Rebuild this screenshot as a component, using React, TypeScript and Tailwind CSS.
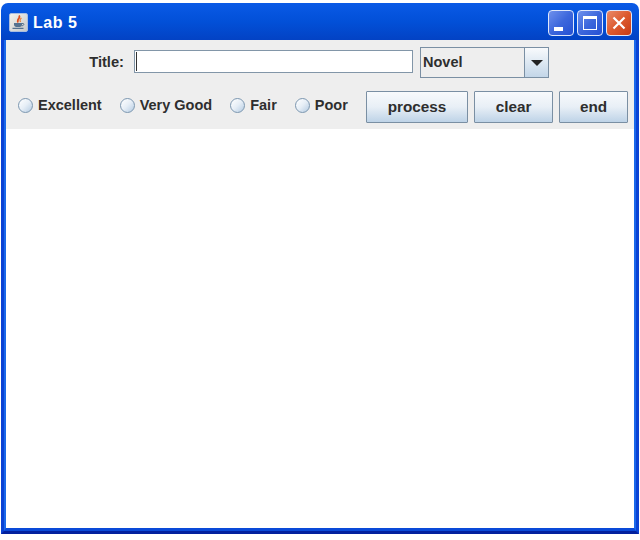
const radioOptions = [
  { label: "Excellent", gap: "mr-[18px]" },
  { label: "Very Good", gap: "mr-[18px]" },
  { label: "Fair", gap: "mr-[18px]" },
  { label: "Poor", gap: "" },
]

function Radio({ label, gap }: { label: string; gap: string }) {
  return (
    <label className={`flex items-center gap-[5px] ${gap}`}>
      <span className="w-[15px] h-[15px] rounded-full border border-[#7c97b0] bg-gradient-to-br from-[#ffffff] via-[#e6eef6] to-[#b4cbe2]" />
      <span className="text-[14.5px] font-bold leading-none text-[#2e2e2e]">{label}</span>
    </label>
  )
}

function SwingButton({ label, width }: { label: string; width: string }) {
  return (
    <button
      className={`${width} h-[32px] border border-[#7a8fa3] rounded-[1px] bg-gradient-to-b from-[#f8fafc] via-[#e8eff6] to-[#bed3e7] text-[15.3px] font-bold text-[#2e2e2e]`}
    >
      {label}
    </button>
  )
}

function WinButton({ children, close }: { children: React.ReactNode; close?: boolean }) {
  return (
    <div
      className={`w-[26px] h-[26px] rounded-[4px] border border-[#dfe8fb] flex items-center justify-center ${
        close
          ? "bg-gradient-to-br from-[#e98a68] via-[#dc5a2e] to-[#c83a14]"
          : "bg-gradient-to-br from-[#6f90ec] via-[#3d67dc] to-[#2450d4]"
      }`}
    >
      {children}
    </div>
  )
}

function JavaIcon() {
  return (
    <div className="w-[19px] h-[19px] rounded-[2px] bg-gradient-to-br from-[#f6f3ea] to-[#c4c8cc] border border-[#a9bde0] flex items-center justify-center">
      <svg width="15" height="16" viewBox="0 0 15 16" fill="none">
        <path d="M8 0.5C10 3 5.5 4 7 7.5" stroke="#e0501e" strokeWidth="1.8" />
        <path d="M10.5 3C9 4 8.5 5.5 9.6 7" stroke="#e8803a" strokeWidth="1.2" />
        <path d="M3 8h8v1.5c0 1.5-1 2.4-2.3 2.4H5.3C4 11.9 3 11 3 9.5z" fill="#55728f" />
        <path d="M11 8.5h1.2c1.1 0 1.1 2.2-1.5 2.4" stroke="#55728f" strokeWidth="1" />
        <path d="M1.5 13.4h11" stroke="#55728f" strokeWidth="1.3" />
      </svg>
    </div>
  )
}

export default function App() {
  return (
    <div className="w-[640px] h-[540px] bg-white pt-[3px] pl-[1px] pr-[1px] pb-[6px] font-['Liberation_Sans',sans-serif]">
      <div className="h-full flex flex-col rounded-t-[7px] overflow-hidden">
        {/* Title bar */}
        <div className="h-[37px] shrink-0 flex items-center pt-[2px] pl-[8px] pr-[7px] bg-gradient-to-b from-[#0a5ae6] via-[#0250d8] to-[#0342c4]">
          <JavaIcon />
          <span className="ml-[5px] text-[16px] tracking-[0.5px] font-bold text-white">Lab 5</span>
          <div className="ml-auto flex gap-[3px]">
            <WinButton>
              <div className="w-[9px] h-[4px] bg-white mt-[12px] mr-[6px]" />
            </WinButton>
            <WinButton>
              <div className="w-[14px] h-[14px] border border-white border-t-[3px]" />
            </WinButton>
            <WinButton close>
              <svg width="16" height="16" viewBox="0 0 16 16">
                <path d="M2.5 2.5l11 11M13.5 2.5l-11 11" stroke="white" strokeWidth="2.2" />
              </svg>
            </WinButton>
          </div>
        </div>

        {/* Window body */}
        <div className="flex-1 flex flex-col border-l-[3px] border-r-[3px] border-b-[3px] border-l-[#0a42d4] border-r-[#0a42d4] border-b-[#02209e]">
          <div className="flex-1 flex flex-col border-l-[2px] border-r-[2px] border-b-[3px] border-l-[#1a68ea] border-r-[#1a68ea] border-b-[#0a4ad8] bg-white">
            <div className="h-[89px] bg-[#eeeeee] flex flex-col">
              <div className="flex items-start pt-[7px] h-[51px]">
                <span className="ml-[83px] mt-[5px] w-[35px] text-right text-[14.7px] leading-[20px] font-bold whitespace-nowrap text-[#2e2e2e]">
                  Title:
                </span>
                <div className="ml-[10px] mt-[3px] w-[279px] h-[23px] bg-white border border-[#8296a8] flex items-center pl-[1px]">
                  <div className="w-[1px] h-[19px] bg-[#333333]" />
                </div>
                <div className="ml-[7px] w-[129px] h-[31px] border border-[#7a8fa3] bg-[#eeeeee] flex">
                  <span className="flex-1 flex items-center pl-[2px] text-[14.5px] font-bold text-[#2e2e2e]">Novel</span>
                  <div className="w-[24px] border-l border-[#7a8fa3] bg-gradient-to-b from-[#f8fafc] to-[#c3d6e8] flex items-center justify-center">
                    <div className="w-0 h-0 border-l-[6px] border-r-[6px] border-t-[6px] border-l-transparent border-r-transparent border-t-[#222222]" />
                  </div>
                </div>
              </div>
              <div className="flex items-center pl-[12px] pr-[6px]">
                <div className="flex items-center pb-[3px]">
                  {radioOptions.map((option) => (
                    <Radio key={option.label} label={option.label} gap={option.gap} />
                  ))}
                </div>
                <div className="ml-auto flex gap-[6px]">
                  <SwingButton label="process" width="w-[102px]" />
                  <SwingButton label="clear" width="w-[79px]" />
                  <SwingButton label="end" width="w-[69px]" />
                </div>
              </div>
            </div>
          </div>
        </div>
      </div>
    </div>
  )
}
